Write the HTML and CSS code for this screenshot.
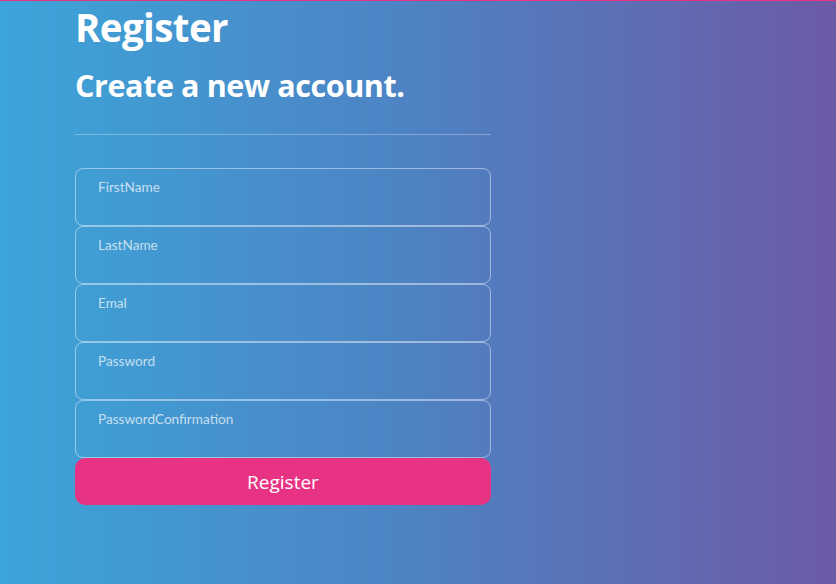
FILE: index.html
```html
<!DOCTYPE html>
<html lang="en">
<head>
<meta charset="utf-8">
<title>Register</title>
<link rel="stylesheet" href="styles.css">
</head>
<body>
<div class="topline"></div>
<main class="page">
  <h1 class="title">Register</h1>
  <h2 class="subtitle">Create a new account.</h2>
  <hr class="divider">
  <form class="form">
    <div class="field"><label class="label">FirstName</label></div>
    <div class="field"><label class="label">LastName</label></div>
    <div class="field"><label class="label">Emal</label></div>
    <div class="field"><label class="label">Password</label></div>
    <div class="field"><label class="label">PasswordConfirmation</label></div>
    <button type="button" class="submit">Register</button>
  </form>
</main>
</body>
</html>
```
FILE: styles.css
```css
html, body {
  margin: 0;
  height: 100%;
}
body {
  background: linear-gradient(to right, #3ca5d9 0%, #4e82c3 50%, #6c5aa7 100%);
  font-family: "Open Sans", "Noto Sans", sans-serif;
  color: #fff;
  overflow: hidden;
}
.topline {
  height: 1px;
  background: #e83385;
}
.page {
  width: 416px;
  margin-left: 75px;
}
.title {
  margin: 0;
  font-size: 38.5px;
  font-weight: 700;
  line-height: 52px;
  letter-spacing: -0.6px;
}
.subtitle {
  margin: 12px 0 0 0;
  font-size: 30.5px;
  font-weight: 700;
  line-height: 40px;
  letter-spacing: -0.4px;
}
.divider {
  margin: 29px 0 0 0;
  border: 0;
  height: 1px;
  background: rgba(255, 255, 255, 0.3);
}
.form {
  margin-top: 33px;
  display: flex;
  flex-direction: column;
}
.field {
  border: 1px solid rgba(255, 255, 255, 0.45);
  border-radius: 8px;
  padding: 6px 0 0 22px;
  box-sizing: border-box;
  height: 58px;
}
.label {
  font-family: Lato, "Open Sans", sans-serif;
  font-size: 13.6px;
  color: rgba(255, 255, 255, 0.7);
  line-height: 16px;
}
.submit {
  height: 47px;
  border: 0;
  border-radius: 10px;
  background: #e83385;
  color: #fff;
  font-family: "Open Sans", sans-serif;
  font-size: 19px;
  padding: 0;
}
```
